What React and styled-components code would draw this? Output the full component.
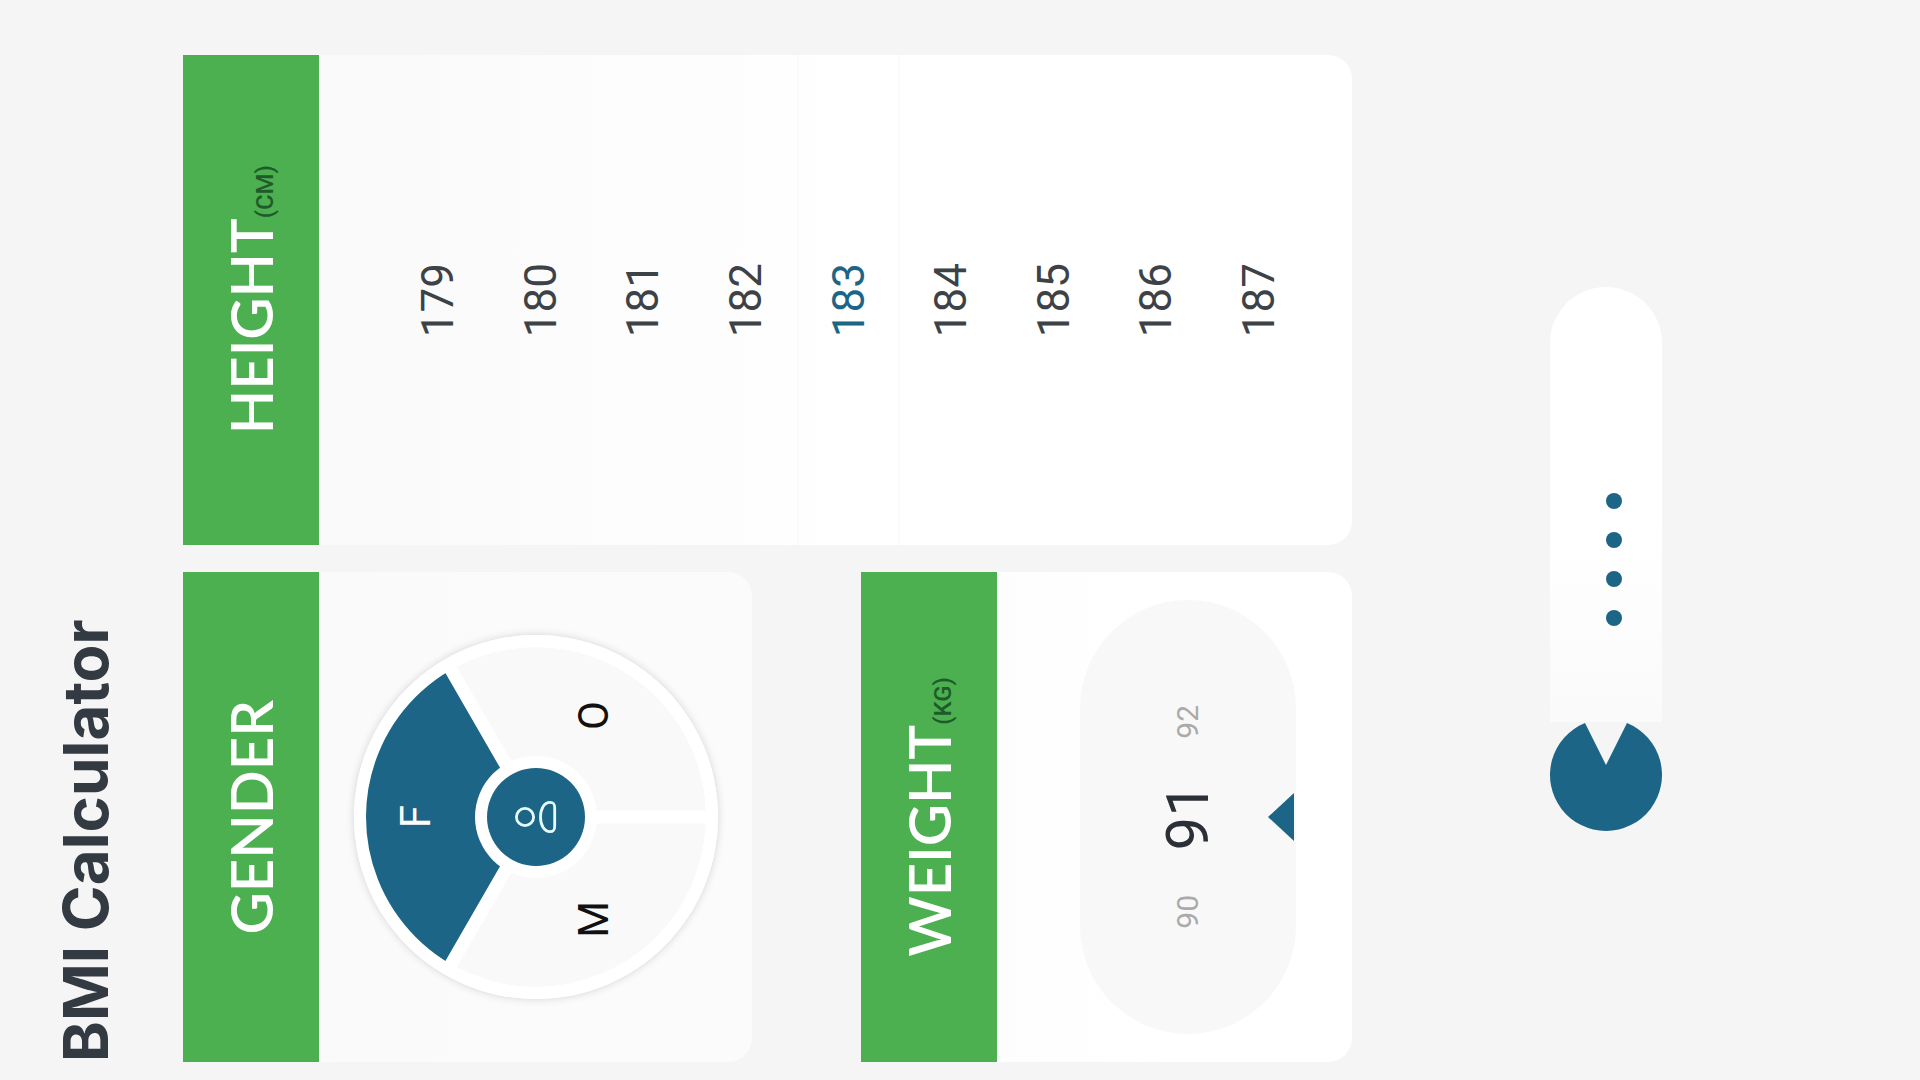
import React, { useState } from "react";
import styled, { createGlobalStyle } from "styled-components";

const GlobalStyle = createGlobalStyle`
  * {
    box-sizing: border-box;
    margin: 0;
    padding: 0;
  }

  body {
    background-color: #f5f5f5;
    color: #333a42;
    font-family: Roboto, "Liberation Sans", sans-serif;
    overflow: hidden;
  }
`;

const Page = styled.main`
  display: flex;
  align-items: stretch;
  min-height: 100vh;
  padding: 55px 0 18px 44px;
`;

const sideways = `
  writing-mode: vertical-rl;
  text-orientation: sideways;
  transform: rotate(180deg);
  white-space: nowrap;
`;

const Title = styled.h1`
  ${sideways}
  width: 139px;
  line-height: 84px;
  font-family: Inter, sans-serif;
  font-size: 62px;
  font-weight: 700;
`;

const Cards = styled.div`
  flex: 1169;
  display: flex;
  flex-direction: column;
  gap: 27px;
`;

const BottomRow = styled.div`
  flex: 1;
  display: flex;
  justify-content: space-between;
  gap: 109px;
`;

const Card = styled.section`
  flex: ${({ $grow }) => $grow || 1};
  display: flex;
  min-width: 0;
  border-radius: 0 24px 24px 0;
  background: linear-gradient(
    to right,
    ${({ $from }) => $from},
    ${({ $to }) => $to} 60%
  );
`;

const CardHeader = styled.header`
  flex: none;
  width: 136px;
  display: flex;
  justify-content: center;
  align-items: center;
  background-color: #4caf50;
`;

const CardTitle = styled.h2`
  ${sideways}
  color: #fff;
  line-height: 72px;
  font-family: Lato, sans-serif;
  font-size: 58px;
  font-weight: 600;
`;

const Unit = styled.small`
  color: #1e5a2a;
  line-height: 0;
  font-family: Roboto, sans-serif;
  font-size: 24px;
  font-weight: 500;
`;

const CardBody = styled.div`
  flex: 1;
  display: flex;
  justify-content: center;
  align-items: center;
`;

const HeightList = styled.ul`
  flex: 1;
  align-self: stretch;
  display: flex;
  padding: 0 42px 0 68px;
  list-style: none;
`;

const HeightItem = styled.li`
  flex: 1;
  display: flex;
  border: solid ${({ $selected }) => ($selected ? "#fafafa" : "transparent")};
  border-width: 0 2px;
`;

const HeightButton = styled.button`
  flex: 1;
  display: flex;
  justify-content: center;
  align-items: center;
  border: none;
  background: none;
  color: ${({ $selected }) => ($selected ? "#1d6586" : "#3d4247")};
  font-family: inherit;
  font-size: 44px;
  cursor: pointer;
`;

const Sideways = styled.span`
  ${sideways}
`;

const Dial = styled.fieldset`
  position: relative;
  width: 364px;
  height: 364px;
  border: none;
  border-radius: 50%;
  background-color: #fff;
  box-shadow: 0 0 8px rgba(0, 0, 0, 0.16);
`;

const DialDrawing = styled.svg`
  display: block;
  width: 100%;
  height: 100%;
`;

const DialOption = styled.label`
  position: absolute;
  left: ${({ $x }) => $x}%;
  top: ${({ $y }) => $y}%;
  display: flex;
  justify-content: center;
  align-items: center;
  width: 60px;
  height: 60px;
  margin: -30px;
  color: ${({ $selected }) => ($selected ? "#fff" : "#111")};
  font-size: 42px;
  cursor: pointer;
`;

const HiddenRadio = styled.input`
  position: absolute;
  opacity: 0;
`;

const WeightPicker = styled.div`
  position: relative;
  display: flex;
  flex-direction: column;
  justify-content: center;
  align-items: center;
  width: 216px;
  height: 434px;
  margin-left: 26px;
  border-radius: 108px;
  background-color: #f8f8f8;
`;

const WeightButton = styled.button`
  display: flex;
  justify-content: center;
  align-items: center;
  width: 100%;
  height: 95px;
  border: none;
  background: none;
  color: ${({ $selected }) => ($selected ? "#2b3036" : "#aaa")};
  font-family: inherit;
  font-size: ${({ $selected }) => ($selected ? 60 : 30)}px;
  cursor: pointer;
`;

const Pointer = styled.span`
  position: absolute;
  right: 2px;
  border: 24px solid transparent;
  border-right: 26px solid #1d6586;
  border-left: none;
`;

const Actions = styled.aside`
  flex: 370;
  display: flex;
  align-items: center;
  padding-left: 198px;
`;

const Slider = styled.button`
  display: flex;
  flex-direction: column;
  justify-content: flex-end;
  align-items: center;
  width: 112px;
  height: 544px;
  border: none;
  border-radius: 56px;
  background: linear-gradient(
    to bottom,
    #fff 45%,
    #fafafa 80%,
    #f5f5f5 80%
  );
  cursor: pointer;
`;

const Dots = styled.span`
  display: flex;
  flex-direction: column;
  gap: 23px;
  margin: 0 0 97px 15px;
`;

const Dot = styled.span`
  width: 16px;
  height: 16px;
  border-radius: 50%;
  background-color: #1d6586;
`;

const heights = [179, 180, 181, 182, 183, 184, 185, 186, 187];

const genders = [
  { value: "F", x: 17, y: 50 },
  { value: "O", x: 66, y: 22 },
  { value: "M", x: 66, y: 78 },
];

const segments = {
  F: "M0 0 L-88 -152.4 A176 176 0 0 0 -88 152.4 Z",
  O: "M0 0 L-88 -152.4 A176 176 0 0 1 176 0 Z",
  M: "M0 0 L-88 152.4 A176 176 0 0 0 176 0 Z",
};

const GenderDial = () => {
  const [gender, setGender] = useState("F");

  return (
    <Dial aria-labelledby="gender-title">
      <DialDrawing viewBox="-182 -182 364 364" aria-hidden="true">
        <circle r="170" fill="#f9f9f9" />
        <path d={segments[gender]} fill="#1d6586" />
        <circle r="176" fill="none" stroke="#fff" strokeWidth="12" />
        <path
          d="M0 0 L-88 -152.4 M0 0 L-88 152.4 M0 0 H176"
          stroke="#fff"
          strokeWidth="13"
        />
        <circle r="61" fill="#fff" />
        <circle r="49" fill="#1d6586" />
        <g fill="none" stroke="#e6fbff" strokeWidth="2.8">
          <circle cx="-11" cy="0" r="8.6" />
          <path d="M4.5 0 C4.5 -8 8 -14.7 14 -14.7 C18 -14.7 18.7 -13 18.7 -9 V9 C18.7 13 18 14.7 14 14.7 C8 14.7 4.5 8 4.5 0 Z" />
        </g>
      </DialDrawing>
      {genders.map(({ value, x, y }) => (
        <DialOption key={value} $x={x} $y={y} $selected={value === gender}>
          <HiddenRadio
            type="radio"
            name="gender"
            value={value}
            checked={value === gender}
            onChange={() => setGender(value)}
          />
          <Sideways>{value}</Sideways>
        </DialOption>
      ))}
    </Dial>
  );
};

const App = () => {
  const [height, setHeight] = useState(183);
  const [weight, setWeight] = useState(91);

  return (
    <>
      <GlobalStyle />
      <Page>
        <Title>BMI Calculator</Title>
        <Cards>
          <Card $from="#f8f8f8" $to="#ffffff">
            <CardHeader>
              <CardTitle>
                HEIGHT<Unit>(CM)</Unit>
              </CardTitle>
            </CardHeader>
            <HeightList>
              {heights.map((value) => (
                <HeightItem key={value} $selected={value === height}>
                  <HeightButton
                    type="button"
                    $selected={value === height}
                    onClick={() => setHeight(value)}
                  >
                    <Sideways>{value}</Sideways>
                  </HeightButton>
                </HeightItem>
              ))}
            </HeightList>
          </Card>
          <BottomRow>
            <Card $grow={569} $from="#f9f9f9" $to="#fbfbfb">
              <CardHeader>
                <CardTitle id="gender-title">GENDER</CardTitle>
              </CardHeader>
              <CardBody>
                <GenderDial />
              </CardBody>
            </Card>
            <Card $grow={491} $from="#fcfcfc" $to="#ffffff">
              <CardHeader>
                <CardTitle>
                  WEIGHT<Unit>(KG)</Unit>
                </CardTitle>
              </CardHeader>
              <CardBody>
                <WeightPicker>
                  {[weight + 1, weight, weight - 1].map((value) => (
                    <WeightButton
                      key={value}
                      type="button"
                      $selected={value === weight}
                      onClick={() => setWeight(value)}
                    >
                      <Sideways>{value}</Sideways>
                    </WeightButton>
                  ))}
                  <Pointer />
                </WeightPicker>
              </CardBody>
            </Card>
          </BottomRow>
        </Cards>
        <Actions>
          <Slider type="button" aria-label="Calculate">
            <Dots>
              <Dot />
              <Dot />
              <Dot />
              <Dot />
            </Dots>
            <svg width="112" height="108" viewBox="-56 -52 112 108">
              <path
                d="M0 -10 L-21 -52 A56 56 0 1 0 21 -52 Z"
                fill="#1d6586"
              />
            </svg>
          </Slider>
        </Actions>
      </Page>
    </>
  );
};

export default App;
